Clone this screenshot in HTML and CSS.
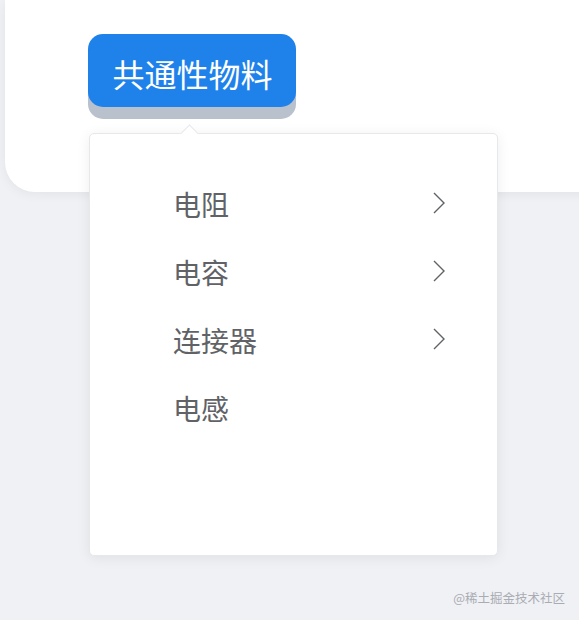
FILE: index.html
```html
<!DOCTYPE html>
<html lang="zh">
<head>
<meta charset="utf-8">
<link rel="stylesheet" href="styles.css">
</head>
<body>
<div class="page">
  <div class="card">
    <button class="btn">共通性物料</button>
  </div>
  <div class="popover">
    <div class="arrow"></div>
    <ul class="menu">
      <li class="item"><span>电阻</span><svg class="chev" viewBox="0 0 12 22"><path d="M1 1 L11 11 L1 21" fill="none" stroke="#5f6266" stroke-width="1.4"/></svg></li>
      <li class="item"><span>电容</span><svg class="chev" viewBox="0 0 12 22"><path d="M1 1 L11 11 L1 21" fill="none" stroke="#5f6266" stroke-width="1.4"/></svg></li>
      <li class="item"><span>连接器</span><svg class="chev" viewBox="0 0 12 22"><path d="M1 1 L11 11 L1 21" fill="none" stroke="#5f6266" stroke-width="1.4"/></svg></li>
      <li class="item"><span>电感</span></li>
    </ul>
  </div>
  <div class="watermark">@稀土掘金技术社区</div>
</div>
</body>
</html>
```
FILE: styles.css
```css
html, body {
  margin: 0;
  padding: 0;
  background: #f0f1f5;
  font-family: "Noto Sans CJK SC", "Noto Sans", sans-serif;
}
.page {
  position: relative;
  width: 579px;
  height: 620px;
  overflow: hidden;
}
.card {
  margin-left: 5px;
  width: 600px;
  height: 192px;
  background: #fff;
  border-bottom-left-radius: 30px;
  box-shadow: 0 2px 12px rgba(0, 0, 0, 0.06);
  padding: 34px 0 0 83px;
  box-sizing: border-box;
}
.btn {
  display: flex;
  align-items: center;
  justify-content: center;
  width: 208px;
  height: 73px;
  border: none;
  border-radius: 15px;
  background: #1f82ea;
  color: #fff;
  font-family: inherit;
  font-size: 32px;
  padding: 5px 0 0 1px;
  box-sizing: border-box;
  box-shadow: 0 12px 0 #b9c1cc;
}
.popover {
  position: absolute;
  left: 89px;
  top: 133px;
  width: 409px;
  height: 423px;
  box-sizing: border-box;
  background: #fff;
  border: 1px solid #e6e8ec;
  border-radius: 5px;
  box-shadow: 0 2px 14px rgba(0, 0, 0, 0.07);
}
.arrow {
  position: absolute;
  left: 93px;
  top: -7px;
  width: 12px;
  height: 12px;
  background: #fff;
  border-left: 1px solid #e6e8ec;
  border-top: 1px solid #e6e8ec;
  transform: rotate(45deg);
}
.menu {
  list-style: none;
  margin: 0;
  padding: 36px 52px 0 83px;
}
.item {
  display: flex;
  align-items: center;
  justify-content: space-between;
  height: 68px;
  font-size: 28px;
  color: #606266;
}
.chev {
  width: 12px;
  height: 22px;
  margin-top: -2px;
}
.watermark {
  position: absolute;
  right: 14px;
  top: 588px;
  font-size: 12.5px;
  color: #a9acb2;
}
```
